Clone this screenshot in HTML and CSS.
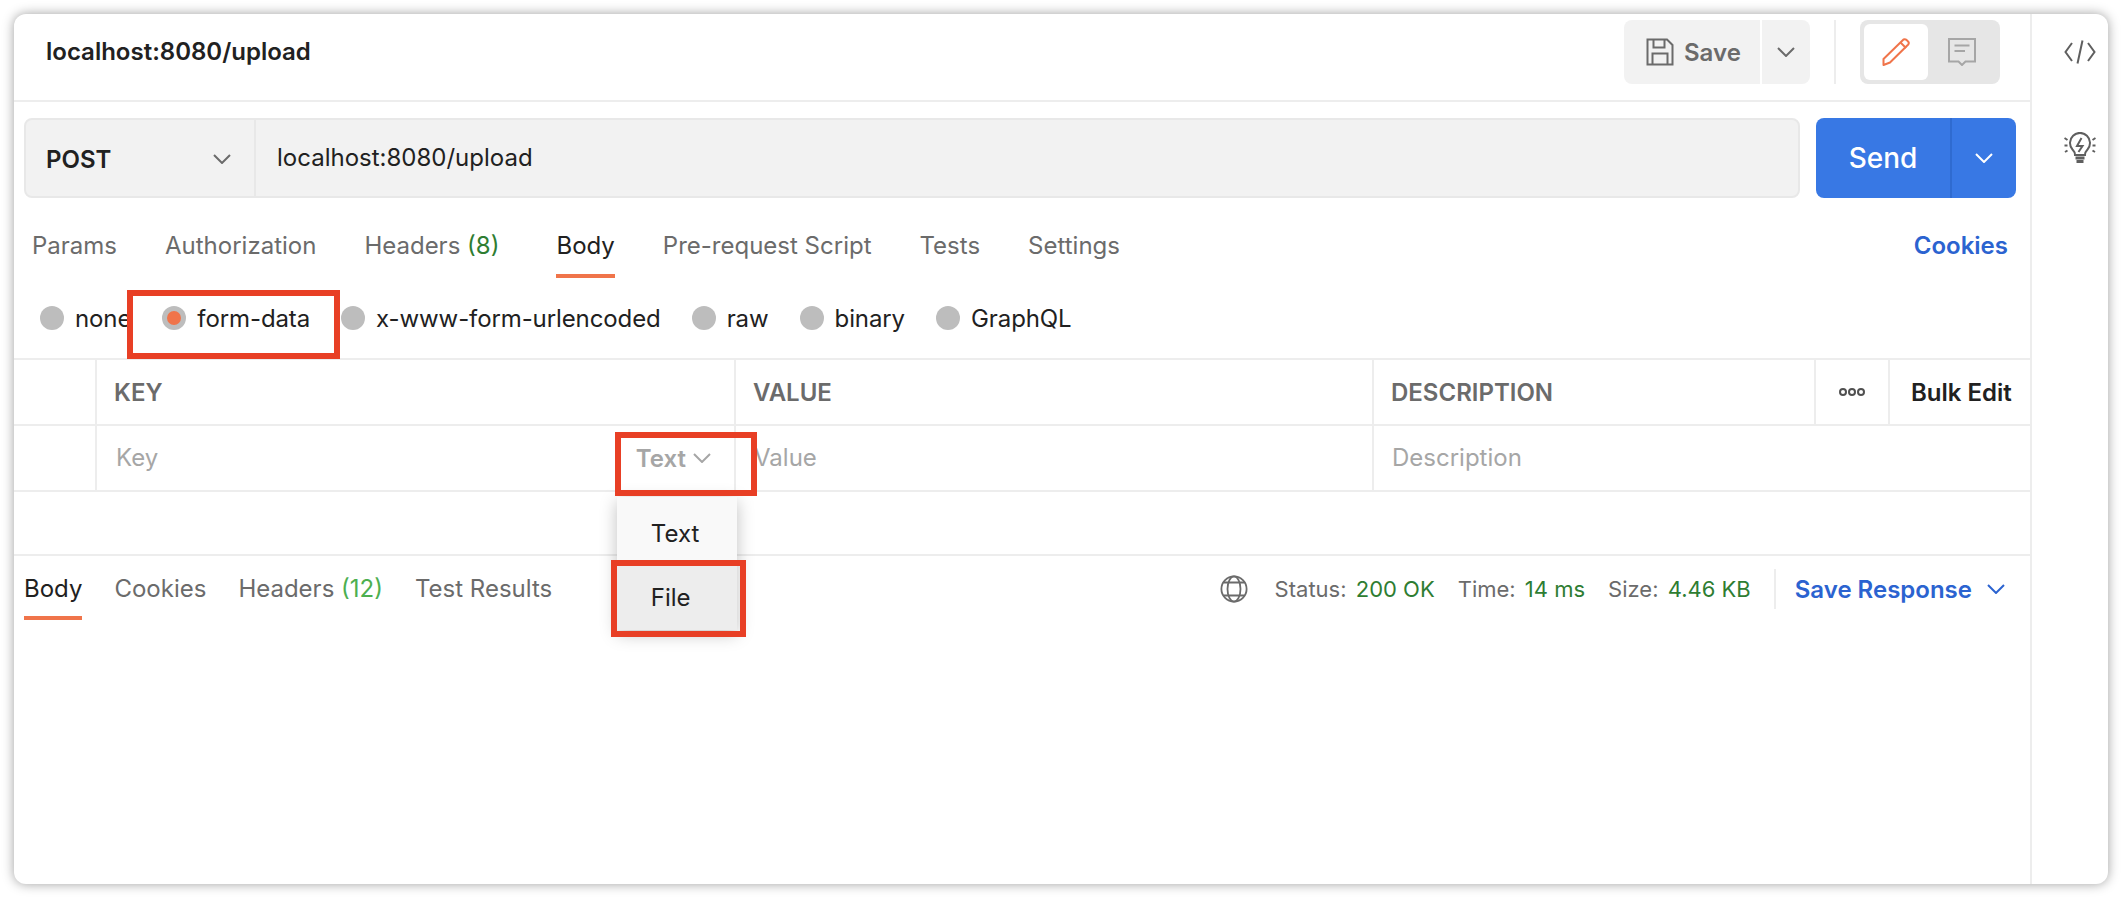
FILE: index.html
```html
<!DOCTYPE html>
<html lang="en">
<head>
    <meta charset="UTF-8">
    <title>localhost:8080/upload</title>
    <link rel="stylesheet" href="styles.css">
</head>
<body>
    <div class="window">
        <div class="main">
            <!-- title bar -->
            <div class="topbar">
                <div class="title">localhost:8080/upload</div>
                <div class="save-btn">
                    <svg class="icon-28" viewBox="0 0 28 28" fill="none" stroke="#6b6b6b" stroke-width="2"><path d="M1.5 1.5H21L26.5 7V26.5H1.5Z"/><path d="M7.5 1.5V9.5H18.5V1.5M13 1.5"/><path d="M6.5 26.5V15.5H21.5V26.5"/></svg>
                    <span>Save</span>
                </div>
                <div class="save-more">
                    <svg class="chevron" viewBox="0 0 18 10" fill="none" stroke="#6b6b6b" stroke-width="2"><path d="M1 1L9 9L17 1"/></svg>
                </div>
                <div class="bar-divider"></div>
                <div class="mode-toggle">
                    <div class="mode active">
                        <svg class="icon-28" viewBox="0 0 28 28" fill="none" stroke="#f0744a" stroke-width="2" stroke-linejoin="round"><path d="M21.5 1.5Q23 0.8 24.5 1.8L26.5 4Q27.3 5.3 26 6.7L8 24.5L1.5 27L1.5 21Z"/><path d="M18.5 4.5L24 10"/></svg>
                    </div>
                    <div class="mode">
                        <svg class="icon-28" viewBox="0 0 28 28" fill="none" stroke="#a6a6a6" stroke-width="2"><path d="M1 1H27V23.5H17.5L14 27L10.5 23.5H1Z"/><path d="M6.5 7.5H21.5M6.5 13H17"/></svg>
                    </div>
                </div>
            </div>

            <!-- request url -->
            <div class="request-row">
                <div class="url-bar">
                    <div class="method">
                        <span>POST</span>
                        <svg class="chevron" viewBox="0 0 18 10" fill="none" stroke="#6b6b6b" stroke-width="2"><path d="M1 1L9 9L17 1"/></svg>
                    </div>
                    <div class="url">localhost:8080/upload</div>
                </div>
                <div class="send">
                    <div class="send-label">Send</div>
                    <div class="send-more">
                        <svg class="chevron" viewBox="0 0 18 10" fill="none" stroke="#fff" stroke-width="2"><path d="M1 1L9 9L17 1"/></svg>
                    </div>
                </div>
            </div>

            <!-- request tabs -->
            <div class="req-tabs">
                <div class="tab">Params</div>
                <div class="tab">Authorization</div>
                <div class="tab">Headers <span class="count">(8)</span></div>
                <div class="tab active">Body</div>
                <div class="tab">Pre-request Script</div>
                <div class="tab">Tests</div>
                <div class="tab">Settings</div>
                <div class="cookies-link">Cookies</div>
            </div>

            <!-- body type -->
            <div class="body-types">
                <div class="radio-item"><span class="radio"></span>none</div>
                <div class="radio-item"><span class="radio selected"></span>form-data</div>
                <div class="radio-item"><span class="radio"></span>x-www-form-urlencoded</div>
                <div class="radio-item"><span class="radio"></span>raw</div>
                <div class="radio-item"><span class="radio"></span>binary</div>
                <div class="radio-item"><span class="radio"></span>GraphQL</div>
            </div>

            <!-- form table -->
            <div class="kv-table">
                <div class="cell cell-first"></div>
                <div class="cell head">KEY</div>
                <div class="cell head">VALUE</div>
                <div class="cell head">DESCRIPTION</div>
                <div class="cell dots">
                    <svg class="dots-icon" viewBox="0 0 28 10" fill="none" stroke="#505050" stroke-width="2"><circle cx="5" cy="5" r="3"/><circle cx="14" cy="5" r="3"/><circle cx="23" cy="5" r="3"/></svg>
                </div>
                <div class="cell bulk">Bulk Edit</div>

                <div class="cell cell-first"></div>
                <div class="cell placeholder key-cell">
                    <span>Key</span>
                    <div class="type-select">
                        <span>Text</span>
                        <svg class="chevron" viewBox="0 0 18 10" fill="none" stroke="#a6a6a6" stroke-width="2"><path d="M1 1L9 9L17 1"/></svg>
                        <div class="type-menu">
                            <div class="type-option">Text</div>
                            <div class="type-option hover">File</div>
                        </div>
                    </div>
                </div>
                <div class="cell placeholder">Value</div>
                <div class="cell placeholder span-3">Description</div>
            </div>
            <div class="table-spacer"></div>

            <!-- response -->
            <div class="res-bar">
                <div class="res-tabs">
                    <div class="tab active">Body</div>
                    <div class="tab">Cookies</div>
                    <div class="tab">Headers <span class="count light">(12)</span></div>
                    <div class="tab">Test Results</div>
                </div>
                <div class="res-meta">
                    <svg class="globe" viewBox="0 0 28 28" fill="none" stroke="#6b6b6b" stroke-width="1.8"><circle cx="14" cy="14" r="12.6"/><ellipse cx="14" cy="14" rx="6.5" ry="12.6"/><path d="M3.5 7.5H24.5M3.5 20.5H24.5"/></svg>
                    <div class="stat">Status: <b>200 OK</b></div>
                    <div class="stat">Time: <b>14 ms</b></div>
                    <div class="stat">Size: <b>4.46 KB</b></div>
                    <div class="meta-divider"></div>
                    <div class="save-response">Save Response</div>
                    <svg class="chevron" viewBox="0 0 18 10" fill="none" stroke="#2b63d0" stroke-width="2"><path d="M1 1L9 9L17 1"/></svg>
                </div>
            </div>
        </div>

        <div class="side">
            <svg class="side-code" viewBox="0 0 32 24" fill="none" stroke="#5f5f5f" stroke-width="2"><path d="M8 3L1.5 12L8 21M24 3L30.5 12L24 21M18.5 0.5L13.5 23.5"/></svg>
            <svg class="side-bulb" viewBox="0 0 32 32" fill="none" stroke="#5f5f5f" stroke-width="2"><path d="M11 23Q11 20 8.5 17.5A10 10 0 1 1 23.5 17.5Q21 20 21 23Z"/><path d="M17.5 6L13 14H18.5L14.5 20" stroke-width="2"/><path d="M11.5 26H20.5M12.5 29.5H19.5" stroke-width="3"/><path d="M0.5 6L3.5 8M0.5 13.5H3.5M1 20L3.5 18.5M31.5 6L28.5 8M31.5 13.5H28.5M31 20L28.5 18.5"/></svg>
        </div>

        <!-- red annotation boxes -->
        <div class="mark mark-radio"></div>
        <div class="mark mark-select"></div>
        <div class="mark mark-file"></div>
    </div>
</body>
</html>
```

FILE: styles.css
```css
* {
    box-sizing: border-box;
}

body {
    margin: 0;
    padding: 14px;
    height: 898px;
    overflow: hidden;
    background-color: #fff;
    font-family: 'Inter', 'Liberation Sans', sans-serif;
    font-size: 24px;
    color: #212121;
}

.window {
    position: relative;
    display: flex;
    width: 2094px;
    height: 870px;
    background-color: #fff;
    border-radius: 12px;
    box-shadow: 0 0 12px rgba(0, 0, 0, 0.38);
}

.main {
    width: 2018px;
    border-right: 2px solid #ededed;
}

.side {
    flex: 1;
    display: flex;
    flex-direction: column;
    padding: 26px 0 0 32px;
}

.side-code {
    width: 32px;
    height: 24px;
}

.side-bulb {
    width: 32px;
    height: 32px;
    margin-top: 68px;
}

/* top bar */
.topbar {
    display: flex;
    align-items: flex-start;
    height: 88px;
    padding: 6px 30px 0 32px;
    border-bottom: 2px solid #ededed;
}

.title {
    flex: 1;
    height: 64px;
    line-height: 64px;
    font-weight: 600;
}

.icon-28 {
    width: 28px;
    height: 28px;
}

.chevron {
    width: 18px;
    height: 10px;
}

.save-btn {
    display: flex;
    align-items: center;
    gap: 10px;
    width: 136px;
    height: 64px;
    padding-left: 22px;
    background-color: #f2f2f2;
    border-radius: 8px 0 0 8px;
    color: #6b6b6b;
    font-weight: 600;
}

.save-more {
    display: flex;
    align-items: center;
    justify-content: center;
    width: 48px;
    height: 64px;
    margin-left: 2px;
    background-color: #f2f2f2;
    border-radius: 0 8px 8px 0;
}

.bar-divider {
    width: 2px;
    height: 64px;
    margin: 0 24px;
    background-color: #ededed;
}

.mode-toggle {
    display: flex;
    width: 140px;
    height: 64px;
    padding: 4px;
    background-color: #e6e6e6;
    border-radius: 8px;
}

.mode {
    flex: 1;
    display: flex;
    align-items: center;
    justify-content: center;
    height: 56px;
    border-radius: 6px;
}

.mode.active {
    flex: none;
    width: 64px;
    background-color: #fff;
}

/* url row */
.request-row {
    display: flex;
    gap: 16px;
    padding: 16px 14px 0 10px;
}

.url-bar {
    flex: 1;
    display: flex;
    height: 80px;
    background-color: #f2f2f2;
    border: 2px solid #e8e8e8;
    border-radius: 8px;
}

.method {
    display: flex;
    align-items: center;
    justify-content: space-between;
    width: 230px;
    padding: 2px 23px 0 20px;
    border-right: 2px solid #e8e8e8;
    font-weight: 600;
}

.url {
    padding-left: 21px;
    line-height: 76px;
}

.send {
    display: flex;
    width: 200px;
    height: 80px;
    background-color: #3878e4;
    border-radius: 8px;
    color: #fff;
}

.send-label {
    width: 136px;
    text-align: center;
    font-size: 28px;
    font-weight: 500;
    line-height: 80px;
    border-right: 2px solid #2f6bd0;
}

.send-more {
    flex: 1;
    display: flex;
    align-items: center;
    justify-content: center;
}

/* tabs */
.req-tabs {
    display: flex;
    gap: 48px;
    height: 80px;
    padding: 32px 22px 0 18px;
}

.tab {
    height: 48px;
    line-height: 32px;
    border-bottom: 4px solid transparent;
    color: #6b6b6b;
    white-space: nowrap;
}

.tab.active {
    color: #212121;
    border-bottom-color: #f0744a;
}

.req-tabs .tab.active {
    margin-left: 9px;
}

.count {
    color: #2e7d32;
}

.count.light {
    color: #4caf50;
}

.cookies-link {
    margin-left: auto;
    line-height: 32px;
    font-weight: 600;
    color: #2b63d0;
}

/* body type radios */
.body-types {
    display: flex;
    align-items: center;
    gap: 31px;
    height: 80px;
    padding-left: 26px;
    letter-spacing: -0.1px;
}

.radio-item {
    display: flex;
    align-items: center;
    gap: 11px;
}

.radio {
    display: flex;
    align-items: center;
    justify-content: center;
    width: 24px;
    height: 24px;
    border-radius: 50%;
    background-color: #bdbdbd;
}

.radio.selected::after {
    content: "";
    width: 14px;
    height: 14px;
    border-radius: 50%;
    background-color: #f0744a;
}

/* table */
.kv-table {
    display: grid;
    grid-template-columns: 81px 639px 638px 442px 74px 142px;
    grid-auto-rows: 66px;
    border-top: 2px solid #ededed;
}

.cell {
    display: flex;
    align-items: center;
    padding-left: 17px;
    border-left: 2px solid #ededed;
    border-bottom: 2px solid #ededed;
}

.cell-first {
    border-left: none;
}

.head {
    font-weight: 600;
    color: #6b6b6b;
}

.dots {
    justify-content: center;
    padding-left: 0;
}

.dots-icon {
    width: 28px;
    height: 10px;
}

.bulk {
    padding-left: 21px;
    font-weight: 600;
}

.placeholder {
    padding-left: 18px;
    padding-bottom: 2px;
    color: #a6a6a6;
}

.span-3 {
    grid-column: span 3;
}

.key-cell {
    justify-content: space-between;
    padding-left: 19px;
    padding-right: 23px;
}

.type-select {
    position: relative;
    display: flex;
    align-items: center;
    gap: 7px;
    margin-top: 2px;
    font-weight: 600;
}

.type-menu {
    position: absolute;
    top: 53px;
    left: -19px;
    width: 120px;
    background-color: #f9f9f9;
    box-shadow: 0 4px 16px rgba(0, 0, 0, 0.25);
    color: #212121;
    font-weight: 400;
    z-index: 2;
}

.type-option {
    height: 64px;
    line-height: 64px;
    padding-left: 34px;
}

.type-option:first-child {
    height: 69px;
    padding-top: 5px;
}

.type-option.hover {
    background-color: #ededed;
}

.table-spacer {
    height: 64px;
    border-bottom: 2px solid #ededed;
}

/* response bar */
.res-bar {
    display: flex;
    justify-content: space-between;
    height: 64px;
    padding: 17px 25px 0 10px;
}

.res-tabs {
    display: flex;
    gap: 32px;
}

.res-tabs .tab {
    height: 47px;
}

.res-meta {
    display: flex;
    align-items: center;
    height: 32px;
    font-size: 22px;
}

.globe {
    width: 28px;
    height: 28px;
    margin-right: 27px;
}

.stat {
    margin-right: 23px;
    color: #6b6b6b;
    white-space: nowrap;
}

.stat b {
    font-weight: 400;
    color: #2e7d32;
    margin-left: 3px;
}

.meta-divider {
    width: 2px;
    height: 40px;
    margin-right: 19px;
    background-color: #ededed;
}

.save-response {
    font-size: 24px;
    font-weight: 600;
    color: #2b63d0;
    margin-right: 15px;
}

/* annotations */
.mark {
    position: absolute;
    border: 6px solid #e83f25;
    z-index: 3;
}

.mark-radio {
    left: 113px;
    top: 276px;
    width: 213px;
    height: 69px;
}

.mark-select {
    left: 601px;
    top: 418px;
    width: 142px;
    height: 64px;
}

.mark-file {
    left: 597px;
    top: 546px;
    width: 135px;
    height: 77px;
}
```
